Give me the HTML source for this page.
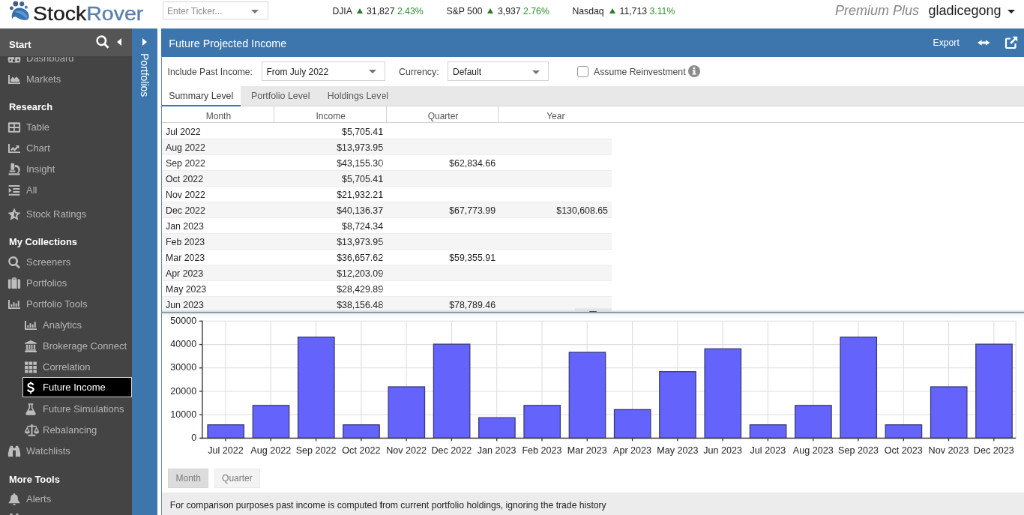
<!DOCTYPE html>
<html>
<head>
<meta charset="utf-8">
<title>Stock Rover</title>
<style>
html,body{margin:0;padding:0;width:1024px;height:515px;overflow:hidden;background:#fff;}
*{box-sizing:border-box;}
#app{will-change:transform;position:absolute;left:0;top:0;width:1366px;height:687px;transform:scale(0.74963);transform-origin:0 0;
  font-family:"Liberation Sans",sans-serif;font-size:13px;color:#222;background:#fff;overflow:hidden;}
.a{position:absolute;white-space:nowrap;}
#logo-text{position:absolute;left:44px;top:2.500px;font-size:25px;line-height:30px;color:#1c1c1c;-webkit-text-stroke:0.35px;transform:scaleX(1.14);transform-origin:0 0;white-space:nowrap;}
#logo-text span{color:#5a7fa8;}
#ticker{position:absolute;left:217px;top:2px;width:141px;height:24px;border:1px solid #d6d6d6;background:#fff;}
#ticker .ph{position:absolute;left:5px;top:0.800px;line-height:23px;font-size:12px;color:#8c8c8c;}
.caret{position:absolute;width:0;height:0;border-left:5px solid transparent;border-right:5px solid transparent;border-top:5px solid #777;}
.idx{position:absolute;top:7px;line-height:16px;font-size:12.25px;color:#222;white-space:nowrap;}
.idx .g{color:#2f8f2f;}
.tri{position:absolute;width:0;height:0;border-left:4px solid transparent;border-right:4px solid transparent;border-bottom:7px solid #2a7a2a;}
#side{position:absolute;left:0;top:38px;width:176px;height:649px;background:#444;overflow:hidden;}
#side-head{position:absolute;left:0;top:0;width:176px;height:37px;background:#555;z-index:3;box-shadow:0 1.200px 0 #444;}
#side-head .t{position:absolute;left:12px;top:14px;font-weight:bold;color:#fff;font-size:13px;line-height:16px;}
.it{position:absolute;left:0;width:176px;height:28px;line-height:28px;color:#b4b4b4;font-size:13px;white-space:nowrap;}
.it .lb{position:absolute;left:35px;top:0;}
.it.sub .lb{left:57px;}
.it svg{position:absolute;left:10px;top:5px;width:18px;height:18px;fill:#bdbdbd;stroke:none;}
.it.sub svg{left:32px;}
.hd{position:absolute;left:12px;height:28px;line-height:28px;color:#fff;font-weight:bold;font-size:12.900px;white-space:nowrap;}
.it.sel{background:#000;border:1px solid #d8d8d8;color:#fff;}
.it.sel svg{fill:#fff;}
#strip{position:absolute;left:176px;top:38px;width:34px;height:649px;background:#3c76ad;}
#strip .v{position:absolute;left:7.300px;top:32.600px;width:20px;color:#fff;font-size:14px;writing-mode:vertical-rl;line-height:20px;white-space:nowrap;}
#phead{position:absolute;left:214.6px;top:38px;width:1152px;height:37.6px;background:#3c76ad;}
#pborder{position:absolute;left:214.6px;top:75px;width:1.6px;height:612px;background:#6f879e;}
.lbl{position:absolute;font-size:12px;color:#444;line-height:16px;margin-top:1px;white-space:nowrap;}
.combo{position:absolute;height:26px;border:1px solid #d2d2d2;background:#fff;}
.combo .tx{position:absolute;left:6px;top:1px;line-height:24px;font-size:12px;color:#222;white-space:nowrap;}
#tabs{position:absolute;left:216px;top:114.700px;width:1150px;height:27.300px;background:#e8e8e8;border-bottom:1px solid #d4d4d4;}
.tab{position:absolute;top:113.600px;height:28px;line-height:29.500px;font-size:12.400px;color:#5a5a5a;white-space:nowrap;}
.gh{position:absolute;top:142px;height:21.200px;line-height:26.600px;font-size:12px;color:#555;text-align:center;padding-left:2px;border-right:1px solid #d4d4d4;}
.row{position:absolute;left:216px;width:600px;height:21px;line-height:22px;font-size:12.350px;color:#262626;border-bottom:1px solid #ececec;}
.row.alt{background:#f5f5f5;}
.row span{position:absolute;top:0;white-space:nowrap;}
.row .c1{left:5px;}
.row .c2{right:305px;}
.row .c3{right:155px;}
.row .c4{right:5px;}
.btn{position:absolute;top:625px;height:26px;line-height:25px;font-size:12px;color:#7a7a7a;text-align:center;}
</style>
</head>
<body>
<div id="app">
<!-- top bar -->
<svg class="a" style="left:12px;top:0" width="30" height="30" viewBox="0 0 30 30">
  <defs><linearGradient id="pg" x1="0" y1="0" x2="1" y2="1"><stop offset="0" stop-color="#2f649b"/><stop offset="1" stop-color="#3f7cbc"/></linearGradient></defs>
  <circle cx="3.400" cy="10.900" r="2.400" fill="#3f5d84"/>
  <circle cx="8.800" cy="5" r="3.400" fill="#3f5d84"/>
  <circle cx="17.200" cy="5.200" r="3.100" fill="#436690"/>
  <circle cx="22.800" cy="9.700" r="2.100" fill="#5580b0"/>
  <path d="M4.300 25.200 C3 21 4.200 15 8.800 11.800 C13.500 9 21 10.800 24.800 16 C27.300 19.500 27.300 25 24.500 26.500 C20 27.600 14.500 25.800 10 22.800 C7.200 21.600 5.500 22.600 4.300 25.200 Z" fill="url(#pg)"/>
  <path d="M7 16 C11 12.800 17.500 13.500 21.500 17.500 C24 20 25 24 24.300 26.300 C21.500 21.500 14 17.200 7 16 Z" fill="#5b97d6"/>
  <path d="M6 19.300 C10.500 18.300 18 21.500 22.500 26.600 C18.500 26.800 13.500 25 10 22.800 C8 21.800 6.800 21.800 5.600 22.600 Z" fill="#3a72ae"/>
</svg>
<div id="logo-text">Stock<span>Rover</span></div>
<div id="ticker"><div class="ph">Enter Ticker...</div><div class="caret" style="left:117px;top:10px"></div></div>
<div class="idx" style="left:443.400px">DJIA</div><div class="tri" style="left:475.500px;top:11.300px"></div><div class="idx" style="left:489px">31,827 <span class="g">2.43%</span></div>
<div class="idx" style="left:595.400px">S&amp;P 500</div><div class="tri" style="left:650.200px;top:11.300px"></div><div class="idx" style="left:664px">3,937 <span class="g">2.76%</span></div>
<div class="idx" style="left:763.400px">Nasdaq</div><div class="tri" style="left:812.500px;top:11.300px"></div><div class="idx" style="left:826.500px">11,713 <span class="g">3.11%</span></div>
<div class="a" style="left:1114px;top:2px;font-size:18px;line-height:24px;font-style:italic;color:#858585;">Premium Plus</div>
<div class="a" style="left:1238.500px;top:2px;font-size:18px;line-height:24px;color:#1e1e1e;">gladicegong</div>
<div class="caret" style="left:1343.500px;top:12.500px;border-top-color:#222"></div>
<!-- sidebar -->
<div id="side">
<div id="side-head"><div class="t">Start</div>
  <svg class="a" style="left:127px;top:8px" width="20" height="20" viewBox="0 0 16 16"><path fill="#fff" fill-rule="evenodd" d="M6.600 1a5.600 5.600 0 0 1 4.600 8.800l3.600 3.600-1.600 1.600-3.600-3.600A5.600 5.600 0 1 1 6.600 1zm0 2a3.600 3.600 0 1 0 0 7.200 3.600 3.600 0 0 0 0-7.200z"/></svg>
  <div class="a" style="left:156px;top:13px;width:0;height:0;border-top:5.500px solid transparent;border-bottom:5.500px solid transparent;border-right:6px solid #fff"></div>
</div>
<div class="it" style="top:26.4px"><svg viewBox="0 0 16 16"><path fill-rule="evenodd" d="M8 1.500a7.500 7.500 0 0 0-6.400 11.300h12.800A7.500 7.500 0 0 0 8 1.500zM3.400 8.600a1.100 1.100 0 1 1 0 2.200 1.100 1.100 0 0 1 0-2.200zM12.600 8.600a1.100 1.100 0 1 1 0 2.200 1.100 1.100 0 0 1 0-2.200zM8.600 6l.9.300-1 3.200a1.500 1.500 0 1 1-1-.3z"/></svg><span class="lb">Dashboard</span></div>
<div class="it" style="top:54.0px"><svg viewBox="0 0 16 12" style="width:16.600px;height:12.450px;top:7.600px;margin-left:0.600px"><path d="M0 0h1.900v9.900H16V12H0z"/><path d="M3 9V6l2.700-3.900 2.400 2.700 2.500-2.900 3.900 4.600V9z"/></svg><span class="lb">Markets</span></div>
<div class="hd" style="top:91.3px">Research</div>
<div class="it" style="top:118.0px"><svg viewBox="0 0 16 16"><path fill-rule="evenodd" d="M2 2h12a1.2 1.2 0 0 1 1.2 1.2v9.6A1.2 1.2 0 0 1 14 14H2a1.2 1.2 0 0 1-1.2-1.2V3.200A1.2 1.2 0 0 1 2 2zm.5 2.200v3h4.700v-3zm6.300 0v3h4.700v-3zm-6.300 4.600v3.500h4.700v-3.500zm6.300 0v3.500h4.700v-3.500z"/></svg><span class="lb">Table</span></div>
<div class="it" style="top:146.0px"><svg viewBox="0 0 16 12" style="width:16.600px;height:12.450px;top:7.600px;margin-left:0.600px"><path d="M0 0h1.900v9.900H16V12H0z"/><path d="M2.900 7.200l3.100-3.300 2.200 2.200 2.700-2.700-1.400-1.400h4.400v4.400l-1.400-1.400-4.300 4.300-2.200-2.200-1.700 1.800z"/></svg><span class="lb">Chart</span></div>
<div class="it" style="top:174.0px"><svg viewBox="0 0 16 16"><path d="M4.700 0.600h2.600a.8.800 0 0 1 .8.800v6.400a.8.800 0 0 1-.8.800H4.700a.8.800 0 0 1-.8-.8V1.400a.8.800 0 0 1 .8-.8z"/><path d="M8.700 2.800a5.400 5.400 0 0 1 4.300 9.400h-2.900a3.300 3.300 0 0 0-1.400-6.700z"/><path d="M2.400 9.400h6.800v1.600H2.400zM1.400 12.600h13.200v2H1.400z"/></svg><span class="lb">Insight</span></div>
<div class="it" style="top:202.1px"><svg viewBox="0 0 16 16"><path d="M1.500 1.800h13v1.800h-13zM6.500 5.300h8v1.800h-8zM6.500 8.800h8v1.800h-8zM1.500 12.300h13v1.800h-13zM1.500 5.200l3.600 2.800-3.600 2.800z"/></svg><span class="lb">All</span></div>
<div class="it" style="top:234.1px"><svg viewBox="0 0 16 16"><path fill-rule="evenodd" d="M8 0.500l2.300 4.800 5.200.700-3.800 3.600 1 5.200L8 12.300l-4.700 2.500 1-5.200L0.500 6l5.200-.7zM8 4.200v6l2.200 1.200-.450-2.500 1.850-1.750-2.500-.35z"/></svg><span class="lb">Stock Ratings</span></div>
<div class="hd" style="top:271.4px">My Collections</div>
<div class="it" style="top:298.1px"><svg viewBox="0 0 16 16"><path fill-rule="evenodd" d="M6.600 0.800a5.800 5.800 0 0 1 4.800 9.100l3.700 3.700-1.800 1.800-3.700-3.700A5.800 5.800 0 1 1 6.600 0.800zm0 2.300a3.500 3.500 0 1 0 0 7 3.500 3.500 0 0 0 0-7z"/></svg><span class="lb">Screeners</span></div>
<div class="it" style="top:326.1px"><svg viewBox="0 0 16 16"><path fill-rule="evenodd" d="M5.400 3.200V2.400A1.200 1.200 0 0 1 6.600 1.200h2.800a1.200 1.200 0 0 1 1.200 1.200v.8h.6v11H4.800v-11zm1.200 0h2.800v-.8H6.600z"/><path d="M2 3.200h1.800v11H2a1.200 1.200 0 0 1-1.200-1.200V4.400A1.200 1.200 0 0 1 2 3.200zM12.200 3.200H14a1.200 1.200 0 0 1 1.200 1.200V13a1.200 1.200 0 0 1-1.200 1.200h-1.800z"/></svg><span class="lb">Portfolios</span></div>
<div class="it" style="top:354.1px"><svg viewBox="0 0 16 12" style="width:16.600px;height:12.450px;top:7.600px;margin-left:0.600px"><path d="M0 0h1.900v9.900H16V12H0z"/><path d="M3.300 5.800h1.900V9H3.300zM6.300 3.200h1.900V9H6.300zM9.300 4.600h1.900V9H9.300zM12.300 1.200h1.900V9h-1.900z"/></svg><span class="lb">Portfolio Tools</span></div>
<div class="it sub" style="top:382.1px"><svg viewBox="0 0 16 12" style="width:16.600px;height:12.450px;top:7.600px;margin-left:0.600px"><path d="M0 0h1.900v9.900H16V12H0z"/><path d="M3.300 5.800h1.900V9H3.300zM6.300 3.200h1.900V9H6.300zM9.300 4.600h1.900V9H9.300zM12.300 1.200h1.900V9h-1.900z"/></svg><span class="lb">Analytics</span></div>
<div class="it sub" style="top:410.2px"><svg viewBox="0 0 16 16"><path d="M8 .8l7 3.200v1.200H1V4z"/><path d="M2.600 6h2v5.400h-2zM5.800 6h1.700v5.400H5.800zM8.500 6h1.700v5.400H8.500zM11.400 6h2v5.400h-2zM1.800 11.800h12.400v1.200H1.800zM1 13.400h14V15H1z"/></svg><span class="lb">Brokerage Connect</span></div>
<div class="it sub" style="top:438.2px"><svg viewBox="0 0 16 16"><path d="M1 1.400h4v3.700H1zM6 1.400h4v3.700H6zM11 1.400h4v3.700h-4zM1 6.200h4v3.700H1zM6 6.200h4v3.700H6zM11 6.200h4v3.700h-4zM1 11h4v3.700H1zM6 11h4v3.700H6zM11 11h4v3.700h-4z"/></svg><span class="lb">Correlation</span></div>
<div class="it sub sel" style="left:29.5px;width:146.5px;top:465.1px;height:27px;line-height:26px"><svg viewBox="0 0 16 16" style="left:1.5px;top:3.5px"><path d="M7.200 0.600h1.600v1.600c1.500.2 2.700 1 3.200 2.400l-1.900.7c-.4-.9-1.200-1.300-2.200-1.300-1.100 0-1.900.5-1.900 1.300 0 .9.900 1.200 2.500 1.600 2 .5 3.800 1.200 3.800 3.400 0 1.800-1.400 2.900-3.500 3.200v1.900H7.200v-1.900c-1.900-.2-3.200-1.200-3.700-2.800l1.900-.7c.4 1.100 1.300 1.700 2.600 1.700 1.300 0 2.100-.5 2.100-1.400 0-1-.9-1.300-2.600-1.700C5.700 8.100 4 7.400 4 5.400c0-1.700 1.300-2.800 3.200-3.100z"/></svg><span class="lb" style="left:26.5px">Future Income</span></div>
<div class="it sub" style="top:494.2px"><svg viewBox="0 0 16 16"><path d="M5 1h6v1.400h-.8v3.800l3.600 6.400a1.400 1.400 0 0 1-1.200 2.200H3.400a1.400 1.400 0 0 1-1.200-2.200l3.600-6.400V2.400H5zm2.200 1.400v4.200L5.600 9.400h4.800L8.800 6.600V2.400z" fill-rule="evenodd"/></svg><span class="lb">Future Simulations</span></div>
<div class="it sub" style="top:522.2px"><svg style="left:31.500px;width:21px;height:19px;top:4.500px" viewBox="0 0 16 16"><path d="M7.200 0.800h1.600v1.400l4.600.600v1.300l-4.600-.500v8.800h3.200V14H4V12.400h3.200V3.600L2.600 4.100V2.800l4.600-.6z"/><path fill-rule="evenodd" d="M2.800 3.600l2.800 5.400a2.800 2.300 0 0 1-5.600 0zM1.400 8.800h2.800L2.800 6zM13.200 3.600l2.800 5.400a2.800 2.300 0 0 1-5.600 0zm-1.400 5.200h2.800L13.200 6z"/></svg><span class="lb">Rebalancing</span></div>
<div class="it" style="top:550.2px"><svg viewBox="0 0 16 16"><path d="M3.3 1.6h3v1.900h.7v3.700H6.300V14.400H0.800V10.200L2.300 3.500h1zM9.700 1.600h3v1.900h1L15.200 10.200V14.400H9.700V7.200H9V3.500h.7zM7 4.200h2v2.600H7z"/></svg><span class="lb">Watchlists</span></div>
<div class="hd" style="top:587.6px">More Tools</div>
<div class="it" style="top:614.1px"><svg viewBox="0 0 16 16"><path d="M8 0.800a1 1 0 0 1 1 1v.5a4.300 4.300 0 0 1 3.300 4.200c0 2.900.8 4.100 2.300 5.300v.9H1.400v-.9C2.900 10.600 3.700 9.400 3.700 6.500A4.300 4.300 0 0 1 7 2.300v-.5a1 1 0 0 1 1-1zM6.300 13.500h3.400a1.700 1.700 0 0 1-3.400 0z"/></svg><span class="lb">Alerts</span></div>
<div class="it" style="top:641.2px"><svg viewBox="0 0 16 16"><path d="M3 1h3v6H3zM10 1h3v6h-3z"/></svg><span class="lb"></span></div>
</div>
<div id="strip">
  <div class="a" style="left:14px;top:13px;width:0;height:0;border-top:5.500px solid transparent;border-bottom:5.500px solid transparent;border-left:6.500px solid #fff"></div>
  <div class="v">Portfolios</div>
</div>
<!-- panel -->
<div id="phead">
  <div class="a" style="left:10.600px;top:0.700px;line-height:38px;color:#fff;font-size:14.350px;">Future Projected Income</div>
  <div class="a" style="left:1030px;top:0;line-height:38px;color:#fff;font-size:12.200px;">Export</div>
  <svg class="a" style="left:1089.400px;top:12.200px" width="17" height="14" viewBox="0 0 17 14"><path fill="#fff" d="M0 7L5.600 3.200V5.400H10.900V3.200L16.500 7L10.900 10.800V8.600H5.600V10.800Z"/></svg>
  <svg class="a" style="left:1125px;top:10px" width="18" height="18" viewBox="0 0 18 18"><path fill="none" stroke="#fff" stroke-width="2.200" d="M8 3.500H3.500a1.500 1.500 0 0 0-1.500 1.500v9.500A1.500 1.500 0 0 0 3.500 16H13a1.500 1.500 0 0 0 1.500-1.500V10"/><path fill="#fff" d="M10.500 0.800h6.700v6.700l-2.400-2.400-5.600 5.600-1.900-1.900 5.600-5.600z"/></svg>
</div>
<div id="pborder"></div>
<div class="lbl" style="left:223.600px;top:87px;font-size:12.150px">Include Past Income:</div>
<div class="combo" style="left:348.500px;top:82px;width:165px"><div class="tx">From July 2022</div><div class="caret" style="left:142px;top:10.300px"></div></div>
<div class="lbl" style="left:532px;top:87px;font-size:12.400px">Currency:</div>
<div class="combo" style="left:597px;top:82px;width:135px"><div class="tx">Default</div><div class="caret" style="left:112px;top:10.500px"></div></div>
<div class="a" style="left:770.400px;top:88px;width:15px;height:15px;border:1.300px solid #949494;border-radius:3px;background:#fff"></div>
<div class="lbl" style="left:792px;top:87px;font-size:12.250px">Assume Reinvestment</div>
<svg class="a" style="left:918px;top:87.300px" width="16" height="16" viewBox="0 0 16 16"><circle cx="8" cy="8" r="8" fill="#8c8c8c"/><rect x="6.800" y="6.500" width="2.600" height="5.500" fill="#fff"/><rect x="5.800" y="6.500" width="2" height="1.300" fill="#fff"/><rect x="5.600" y="11.200" width="5" height="1.400" fill="#fff"/><circle cx="8" cy="3.900" r="1.500" fill="#fff"/></svg>
<div id="tabs"></div>
<div class="tab" style="left:216px;width:105px;background:#fff;color:#3a3a3a;border-bottom:2.500px solid #3c76ad;padding-left:9.200px">Summary Level</div>
<div class="tab" style="left:335px">Portfolio Level</div>
<div class="tab" style="left:436.800px">Holdings Level</div>
<div class="a" style="left:216px;top:142px;width:1150px;height:22px;border-bottom:1.300px solid #d0d0d0;background:#fff"></div>
<div class="gh" style="left:216px;width:149.800px">Month</div>
<div class="gh" style="left:365.800px;width:149.800px">Income</div>
<div class="gh" style="left:515.600px;width:149.800px">Quarter</div>
<div class="gh" style="left:665.400px;width:149.800px;border-right:none">Year</div>
<div class="row" style="top:164.8px"><span class="c1">Jul 2022</span><span class="c2">$5,705.41</span><span class="c3"></span><span class="c4"></span></div>
<div class="row alt" style="top:185.8px"><span class="c1">Aug 2022</span><span class="c2">$13,973.95</span><span class="c3"></span><span class="c4"></span></div>
<div class="row" style="top:206.8px"><span class="c1">Sep 2022</span><span class="c2">$43,155.30</span><span class="c3">$62,834.66</span><span class="c4"></span></div>
<div class="row alt" style="top:227.8px"><span class="c1">Oct 2022</span><span class="c2">$5,705.41</span><span class="c3"></span><span class="c4"></span></div>
<div class="row" style="top:248.8px"><span class="c1">Nov 2022</span><span class="c2">$21,932.21</span><span class="c3"></span><span class="c4"></span></div>
<div class="row alt" style="top:269.8px"><span class="c1">Dec 2022</span><span class="c2">$40,136.37</span><span class="c3">$67,773.99</span><span class="c4">$130,608.65</span></div>
<div class="row" style="top:290.8px"><span class="c1">Jan 2023</span><span class="c2">$8,724.34</span><span class="c3"></span><span class="c4"></span></div>
<div class="row alt" style="top:311.8px"><span class="c1">Feb 2023</span><span class="c2">$13,973.95</span><span class="c3"></span><span class="c4"></span></div>
<div class="row" style="top:332.8px"><span class="c1">Mar 2023</span><span class="c2">$36,657.62</span><span class="c3">$59,355.91</span><span class="c4"></span></div>
<div class="row alt" style="top:353.8px"><span class="c1">Apr 2023</span><span class="c2">$12,203.09</span><span class="c3"></span><span class="c4"></span></div>
<div class="row" style="top:374.8px"><span class="c1">May 2023</span><span class="c2">$28,429.89</span><span class="c3"></span><span class="c4"></span></div>
<div class="row alt" style="top:395.8px"><span class="c1">Jun 2023</span><span class="c2">$38,156.48</span><span class="c3">$78,789.46</span><span class="c4"></span></div>
<!-- splitter -->
<div class="a" style="left:216px;top:412.500px;width:1150px;height:3.500px;background:linear-gradient(rgba(225,232,236,0),rgba(205,214,220,0.900))"></div><div class="a" style="left:767px;top:410.500px;width:49px;height:5.500px;background:linear-gradient(#ececec,#d6dade)"></div>
<div class="a" style="left:786px;top:414.600px;width:10px;height:2.400px;background:#4c4c4c;border-radius:1px"></div>
<div class="a" style="left:216px;top:415.600px;width:1150px;height:2.500px;background:#909da7"></div>
<div class="a" style="left:216px;top:418px;width:1150px;height:6px;background:linear-gradient(#f0f5f7,#fcfefe)"></div>
<svg class="a" style="left:0;top:0" width="1366" height="687" viewBox="0 0 1366 687" font-family="Liberation Sans, sans-serif" font-size="13">
<line x1="269.9" x2="1355.2" y1="553.3" y2="553.3" stroke="#dedede" stroke-width="1.1"/>
<line x1="269.9" x2="1355.2" y1="522.0" y2="522.0" stroke="#dedede" stroke-width="1.1"/>
<line x1="269.9" x2="1355.2" y1="490.8" y2="490.8" stroke="#dedede" stroke-width="1.1"/>
<line x1="269.9" x2="1355.2" y1="459.6" y2="459.6" stroke="#dedede" stroke-width="1.1"/>
<line x1="269.9" x2="1355.2" y1="428.3" y2="428.3" stroke="#dedede" stroke-width="1.1"/>
<line x1="301.0" x2="301.0" y1="428.3" y2="584.5" stroke="#dedede" stroke-width="1.1"/>
<line x1="361.3" x2="361.3" y1="428.3" y2="584.5" stroke="#dedede" stroke-width="1.1"/>
<line x1="421.6" x2="421.6" y1="428.3" y2="584.5" stroke="#dedede" stroke-width="1.1"/>
<line x1="481.9" x2="481.9" y1="428.3" y2="584.5" stroke="#dedede" stroke-width="1.1"/>
<line x1="542.1" x2="542.1" y1="428.3" y2="584.5" stroke="#dedede" stroke-width="1.1"/>
<line x1="602.4" x2="602.4" y1="428.3" y2="584.5" stroke="#dedede" stroke-width="1.1"/>
<line x1="662.7" x2="662.7" y1="428.3" y2="584.5" stroke="#dedede" stroke-width="1.1"/>
<line x1="723.0" x2="723.0" y1="428.3" y2="584.5" stroke="#dedede" stroke-width="1.1"/>
<line x1="783.3" x2="783.3" y1="428.3" y2="584.5" stroke="#dedede" stroke-width="1.1"/>
<line x1="843.6" x2="843.6" y1="428.3" y2="584.5" stroke="#dedede" stroke-width="1.1"/>
<line x1="903.8" x2="903.8" y1="428.3" y2="584.5" stroke="#dedede" stroke-width="1.1"/>
<line x1="964.1" x2="964.1" y1="428.3" y2="584.5" stroke="#dedede" stroke-width="1.1"/>
<line x1="1024.4" x2="1024.4" y1="428.3" y2="584.5" stroke="#dedede" stroke-width="1.1"/>
<line x1="1084.7" x2="1084.7" y1="428.3" y2="584.5" stroke="#dedede" stroke-width="1.1"/>
<line x1="1145.0" x2="1145.0" y1="428.3" y2="584.5" stroke="#dedede" stroke-width="1.1"/>
<line x1="1205.3" x2="1205.3" y1="428.3" y2="584.5" stroke="#dedede" stroke-width="1.1"/>
<line x1="1265.5" x2="1265.5" y1="428.3" y2="584.5" stroke="#dedede" stroke-width="1.1"/>
<line x1="1325.8" x2="1325.8" y1="428.3" y2="584.5" stroke="#dedede" stroke-width="1.1"/>
<line x1="1355.2" x2="1355.2" y1="428.3" y2="584.5" stroke="#dedede" stroke-width="1.1"/>
<rect x="277.0" y="566.7" width="48.4" height="17.8" fill="#6464fc" stroke="#3a3a78" stroke-width="1.3"/>
<rect x="337.3" y="540.8" width="48.4" height="43.6" fill="#6464fc" stroke="#3a3a78" stroke-width="1.3"/>
<rect x="397.6" y="449.7" width="48.4" height="134.8" fill="#6464fc" stroke="#3a3a78" stroke-width="1.3"/>
<rect x="457.8" y="566.7" width="48.4" height="17.8" fill="#6464fc" stroke="#3a3a78" stroke-width="1.3"/>
<rect x="518.1" y="516.0" width="48.4" height="68.5" fill="#6464fc" stroke="#3a3a78" stroke-width="1.3"/>
<rect x="578.4" y="459.1" width="48.4" height="125.3" fill="#6464fc" stroke="#3a3a78" stroke-width="1.3"/>
<rect x="638.7" y="557.2" width="48.4" height="27.2" fill="#6464fc" stroke="#3a3a78" stroke-width="1.3"/>
<rect x="699.0" y="540.8" width="48.4" height="43.6" fill="#6464fc" stroke="#3a3a78" stroke-width="1.3"/>
<rect x="759.3" y="470.0" width="48.4" height="114.5" fill="#6464fc" stroke="#3a3a78" stroke-width="1.3"/>
<rect x="819.5" y="546.4" width="48.4" height="38.1" fill="#6464fc" stroke="#3a3a78" stroke-width="1.3"/>
<rect x="879.8" y="495.7" width="48.4" height="88.8" fill="#6464fc" stroke="#3a3a78" stroke-width="1.3"/>
<rect x="940.1" y="465.3" width="48.4" height="119.2" fill="#6464fc" stroke="#3a3a78" stroke-width="1.3"/>
<rect x="1000.4" y="566.7" width="48.4" height="17.8" fill="#6464fc" stroke="#3a3a78" stroke-width="1.3"/>
<rect x="1060.7" y="540.8" width="48.4" height="43.6" fill="#6464fc" stroke="#3a3a78" stroke-width="1.3"/>
<rect x="1121.0" y="449.7" width="48.4" height="134.8" fill="#6464fc" stroke="#3a3a78" stroke-width="1.3"/>
<rect x="1181.2" y="566.7" width="48.4" height="17.8" fill="#6464fc" stroke="#3a3a78" stroke-width="1.3"/>
<rect x="1241.5" y="516.0" width="48.4" height="68.5" fill="#6464fc" stroke="#3a3a78" stroke-width="1.3"/>
<rect x="1301.8" y="459.1" width="48.4" height="125.3" fill="#6464fc" stroke="#3a3a78" stroke-width="1.3"/>
<line x1="269.9" x2="269.9" y1="427.8" y2="585.2" stroke="#383838" stroke-width="1.4"/>
<line x1="266.9" x2="1355.2" y1="584.5" y2="584.5" stroke="#383838" stroke-width="1.4"/>
<line x1="265.9" x2="269.9" y1="584.5" y2="584.5" stroke="#383838" stroke-width="1.3"/>
<text x="262.1" y="588.1" text-anchor="end" fill="#222" font-size="12.5">0</text>
<line x1="265.9" x2="269.9" y1="553.3" y2="553.3" stroke="#383838" stroke-width="1.3"/>
<text x="262.1" y="556.9" text-anchor="end" fill="#222" font-size="12.5">10000</text>
<line x1="265.9" x2="269.9" y1="522.0" y2="522.0" stroke="#383838" stroke-width="1.3"/>
<text x="262.1" y="525.6" text-anchor="end" fill="#222" font-size="12.5">20000</text>
<line x1="265.9" x2="269.9" y1="490.8" y2="490.8" stroke="#383838" stroke-width="1.3"/>
<text x="262.1" y="494.4" text-anchor="end" fill="#222" font-size="12.5">30000</text>
<line x1="265.9" x2="269.9" y1="459.6" y2="459.6" stroke="#383838" stroke-width="1.3"/>
<text x="262.1" y="463.2" text-anchor="end" fill="#222" font-size="12.5">40000</text>
<line x1="265.9" x2="269.9" y1="428.3" y2="428.3" stroke="#383838" stroke-width="1.3"/>
<text x="262.1" y="431.9" text-anchor="end" fill="#222" font-size="12.5">50000</text>
<line x1="301.0" x2="301.0" y1="584.5" y2="588.5" stroke="#383838" stroke-width="1.3"/>
<text x="301.0" y="605.2" text-anchor="middle" fill="#222" font-size="12.6">Jul 2022</text>
<line x1="361.3" x2="361.3" y1="584.5" y2="588.5" stroke="#383838" stroke-width="1.3"/>
<text x="361.3" y="605.2" text-anchor="middle" fill="#222" font-size="12.6">Aug 2022</text>
<line x1="421.6" x2="421.6" y1="584.5" y2="588.5" stroke="#383838" stroke-width="1.3"/>
<text x="421.6" y="605.2" text-anchor="middle" fill="#222" font-size="12.6">Sep 2022</text>
<line x1="481.9" x2="481.9" y1="584.5" y2="588.5" stroke="#383838" stroke-width="1.3"/>
<text x="481.9" y="605.2" text-anchor="middle" fill="#222" font-size="12.6">Oct 2022</text>
<line x1="542.1" x2="542.1" y1="584.5" y2="588.5" stroke="#383838" stroke-width="1.3"/>
<text x="542.1" y="605.2" text-anchor="middle" fill="#222" font-size="12.6">Nov 2022</text>
<line x1="602.4" x2="602.4" y1="584.5" y2="588.5" stroke="#383838" stroke-width="1.3"/>
<text x="602.4" y="605.2" text-anchor="middle" fill="#222" font-size="12.6">Dec 2022</text>
<line x1="662.7" x2="662.7" y1="584.5" y2="588.5" stroke="#383838" stroke-width="1.3"/>
<text x="662.7" y="605.2" text-anchor="middle" fill="#222" font-size="12.6">Jan 2023</text>
<line x1="723.0" x2="723.0" y1="584.5" y2="588.5" stroke="#383838" stroke-width="1.3"/>
<text x="723.0" y="605.2" text-anchor="middle" fill="#222" font-size="12.6">Feb 2023</text>
<line x1="783.3" x2="783.3" y1="584.5" y2="588.5" stroke="#383838" stroke-width="1.3"/>
<text x="783.3" y="605.2" text-anchor="middle" fill="#222" font-size="12.6">Mar 2023</text>
<line x1="843.6" x2="843.6" y1="584.5" y2="588.5" stroke="#383838" stroke-width="1.3"/>
<text x="843.6" y="605.2" text-anchor="middle" fill="#222" font-size="12.6">Apr 2023</text>
<line x1="903.8" x2="903.8" y1="584.5" y2="588.5" stroke="#383838" stroke-width="1.3"/>
<text x="903.8" y="605.2" text-anchor="middle" fill="#222" font-size="12.6">May 2023</text>
<line x1="964.1" x2="964.1" y1="584.5" y2="588.5" stroke="#383838" stroke-width="1.3"/>
<text x="964.1" y="605.2" text-anchor="middle" fill="#222" font-size="12.6">Jun 2023</text>
<line x1="1024.4" x2="1024.4" y1="584.5" y2="588.5" stroke="#383838" stroke-width="1.3"/>
<text x="1024.4" y="605.2" text-anchor="middle" fill="#222" font-size="12.6">Jul 2023</text>
<line x1="1084.7" x2="1084.7" y1="584.5" y2="588.5" stroke="#383838" stroke-width="1.3"/>
<text x="1084.7" y="605.2" text-anchor="middle" fill="#222" font-size="12.6">Aug 2023</text>
<line x1="1145.0" x2="1145.0" y1="584.5" y2="588.5" stroke="#383838" stroke-width="1.3"/>
<text x="1145.0" y="605.2" text-anchor="middle" fill="#222" font-size="12.6">Sep 2023</text>
<line x1="1205.3" x2="1205.3" y1="584.5" y2="588.5" stroke="#383838" stroke-width="1.3"/>
<text x="1205.3" y="605.2" text-anchor="middle" fill="#222" font-size="12.6">Oct 2023</text>
<line x1="1265.5" x2="1265.5" y1="584.5" y2="588.5" stroke="#383838" stroke-width="1.3"/>
<text x="1265.5" y="605.2" text-anchor="middle" fill="#222" font-size="12.6">Nov 2023</text>
<line x1="1325.8" x2="1325.8" y1="584.5" y2="588.5" stroke="#383838" stroke-width="1.3"/>
<text x="1325.8" y="605.2" text-anchor="middle" fill="#222" font-size="12.6">Dec 2023</text>
</svg>
<div class="btn" style="left:224.400px;width:53.600px;background:#dcdcdc;border:1px solid #d6d6d6">Month</div>
<div class="btn" style="left:285.900px;width:61px;background:#f3f3f3;border:1px solid #e9e9e9">Quarter</div>
<div class="a" style="left:216.200px;top:656.700px;width:1150px;height:31px;background:#ececec"></div>
<div class="a" style="left:226.800px;top:666.300px;line-height:16px;font-size:12.200px;color:#222">For comparison purposes past income is computed from current portfolio holdings, ignoring the trade history</div>
</div>
</body>
</html>
